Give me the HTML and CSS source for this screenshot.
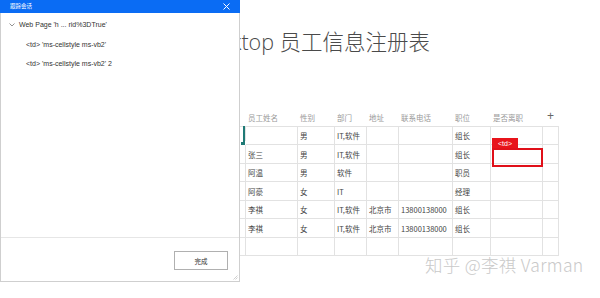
FILE: index.html
```
<!DOCTYPE html>
<html lang="zh-CN">
<head>
<meta charset="utf-8">
<title>员工信息注册表</title>
<link rel="stylesheet" href="styles.css">
</head>
<body>
<div class="page">
  <h1 class="title">Desktop 员工信息注册表</h1>
  <div class="sheet">
    <div class="hd"></div><div class="hd">员工姓名</div><div class="hd">性别</div><div class="hd">部门</div><div class="hd">地址</div><div class="hd">联系电话</div><div class="hd">职位</div><div class="hd">是否离职</div><div class="hd plus">+</div>

    <div class="c sel"><span class="handle"></span></div><div class="c"></div><div class="c">男</div><div class="c">IT,软件</div><div class="c"></div><div class="c"></div><div class="c">组长</div><div class="c"></div><div class="c"></div>

    <div class="c"></div><div class="c">张三</div><div class="c">男</div><div class="c">IT,软件</div><div class="c"></div><div class="c"></div><div class="c">组长</div><div class="c target"><span class="tag">&lt;td&gt;</span><span class="box"></span></div><div class="c"></div>

    <div class="c"></div><div class="c">阿温</div><div class="c">男</div><div class="c">软件</div><div class="c"></div><div class="c"></div><div class="c">职员</div><div class="c"></div><div class="c"></div>

    <div class="c"></div><div class="c">阿豪</div><div class="c">女</div><div class="c">IT</div><div class="c"></div><div class="c"></div><div class="c">经理</div><div class="c"></div><div class="c"></div>

    <div class="c"></div><div class="c">李祺</div><div class="c">女</div><div class="c">IT,软件</div><div class="c">北京市</div><div class="c">13800138000</div><div class="c">组长</div><div class="c"></div><div class="c"></div>

    <div class="c"></div><div class="c">李祺</div><div class="c">女</div><div class="c">IT,软件</div><div class="c">北京市</div><div class="c">13800138000</div><div class="c">组长</div><div class="c"></div><div class="c"></div>

    <div class="c"></div><div class="c"></div><div class="c"></div><div class="c"></div><div class="c"></div><div class="c"></div><div class="c"></div><div class="c"></div><div class="c"></div>
  </div>
</div>

<div class="dialog">
  <div class="dlg-head">
    <span class="dlg-title">跟踪会话</span>
    <svg class="dlg-close" width="7" height="7" viewBox="0 0 7 7"><path d="M0.5 0.5 L6.5 6.5 M6.5 0.5 L0.5 6.5" stroke="#fff" stroke-width="1" fill="none"/></svg>
  </div>
  <div class="dlg-body">
    <div class="node root">
      <svg class="chev" width="6" height="4" viewBox="0 0 6 4"><path d="M0.5 0.5 L3 3 L5.5 0.5" stroke="#777" stroke-width="0.8" fill="none"/></svg>
      <span>Web Page 'h ... rid%3DTrue'</span>
    </div>
    <div class="node child">&lt;td&gt; 'ms-cellstyle ms-vb2'</div>
    <div class="node child">&lt;td&gt; 'ms-cellstyle ms-vb2' 2</div>
  </div>
  <div class="dlg-foot">
    <button class="btn">完成</button>
    <svg class="grip" width="5" height="5" viewBox="0 0 5 5"><path d="M4.5 0.5 L0.5 4.5 M4.5 2.5 L2.5 4.5" stroke="#bbb" stroke-width="0.7"/></svg>
  </div>
</div>

<div class="watermark">知乎 @李祺 Varman</div>
</body>
</html>
```

FILE: styles.css
```
html, body {
  margin: 0;
  padding: 0;
}
body {
  width: 600px;
  height: 298px;
  overflow: hidden;
  background: #fff;
  position: relative;
  font-family: "Liberation Sans", "Noto Sans CJK SC", sans-serif;
}

.page {
  padding: 28px 0 0 180px;
}

.title {
  margin: 0 0 52px 0;
  padding-left: 14px;
  height: 28px;
  line-height: 28px;
  font-family: "Open Sans", "Noto Sans CJK SC", sans-serif;
  font-weight: 300;
  font-size: 21.5px;
  color: #4a4a4a;
  white-space: nowrap;
}

.sheet {
  display: grid;
  grid-template-columns: 66px 52px 37px 32px 32px 54px 38px 52px 16px;
  grid-template-rows: 19px 18px 19px 18px 19px 18px 19px 18px;
  width: 379px;
  font-family: "Noto Sans CJK SC", sans-serif;
  font-size: 7.5px;
  color: #444;
}

.hd {
  box-sizing: border-box;
  border-bottom: 1px solid #e2e2e2;
  padding-left: 2px;
  display: flex;
  align-items: center;
  color: #999;
  white-space: nowrap;
}
.hd.plus {
  font-family: "Liberation Sans", sans-serif;
  font-size: 12px;
  color: #666;
  padding-left: 4px;
  padding-bottom: 3px;
}

.c {
  box-sizing: border-box;
  border-right: 1px solid #e2e2e2;
  border-bottom: 1px solid #e2e2e2;
  padding-left: 2px;
  display: flex;
  align-items: center;
  white-space: nowrap;
  position: relative;
}

.sel::after {
  content: "";
  position: absolute;
  right: 0;
  top: -1px;
  bottom: -1px;
  width: 2px;
  background: #1f7a76;
}
.sel .handle {
  position: absolute;
  right: -1px;
  bottom: -2px;
  width: 4px;
  height: 3px;
  background: #1f7a76;
  border: 1px solid #fff;
}

.target .tag {
  position: absolute;
  left: 1px;
  top: -7px;
  width: 26px;
  height: 11px;
  background: #e8141b;
  color: #fff;
  font-family: "Liberation Sans", sans-serif;
  font-size: 7px;
  line-height: 11px;
  text-align: center;
  z-index: 2;
}
.target .box {
  position: absolute;
  left: 1px;
  top: 3px;
  width: 51px;
  height: 19px;
  box-sizing: border-box;
  border: 2px solid #e01019;
  z-index: 2;
}

.dialog {
  position: absolute;
  left: 0;
  top: 0;
  width: 240px;
  height: 282px;
  box-sizing: border-box;
  border: 1px solid #cfcfcf;
  border-top: none;
  background: #fff;
  display: flex;
  flex-direction: column;
  z-index: 5;
}

.dlg-head {
  height: 13px;
  background: #0a6cf4;
  margin: 0 -1px;
  display: flex;
  align-items: center;
  justify-content: space-between;
  padding: 0 10px 0 10px;
  flex: none;
}
.dlg-title {
  color: #fff;
  font-family: "Noto Sans CJK SC", sans-serif;
  font-size: 5.5px;
  line-height: 13px;
}
.dlg-close {
  display: block;
}

.dlg-body {
  flex: 1;
  padding-top: 2px;
  font-size: 7px;
  color: #333;
}
.node {
  height: 19.5px;
  display: flex;
  align-items: center;
  white-space: nowrap;
}
.node.root {
  padding-left: 8px;
  gap: 4px;
}
.node.child {
  padding-left: 25px;
}
.chev {
  display: block;
}

.dlg-foot {
  flex: none;
  height: 44px;
  box-sizing: border-box;
  border-top: 1px solid #e6e6e6;
  display: flex;
  justify-content: flex-end;
  align-items: flex-start;
  padding: 13px 11px 0 0;
  position: relative;
}
.btn {
  width: 54px;
  height: 19px;
  box-sizing: border-box;
  border: 1px solid #b0b0b0;
  background: #fff;
  font-family: "Noto Sans CJK SC", sans-serif;
  font-size: 6.5px;
  color: #333;
  padding: 0;
  margin: 0;
}
.grip {
  position: absolute;
  right: 1px;
  bottom: 1px;
}

.watermark {
  position: absolute;
  left: 425px;
  top: 253px;
  font-family: "Noto Sans CJK SC", sans-serif;
  font-weight: 300;
  font-size: 17.5px;
  letter-spacing: 0.3px;
  line-height: 24px;
  color: #c9c9c9;
  text-shadow: 0 0 1px #fff;
  white-space: nowrap;
  z-index: 6;
}
```
